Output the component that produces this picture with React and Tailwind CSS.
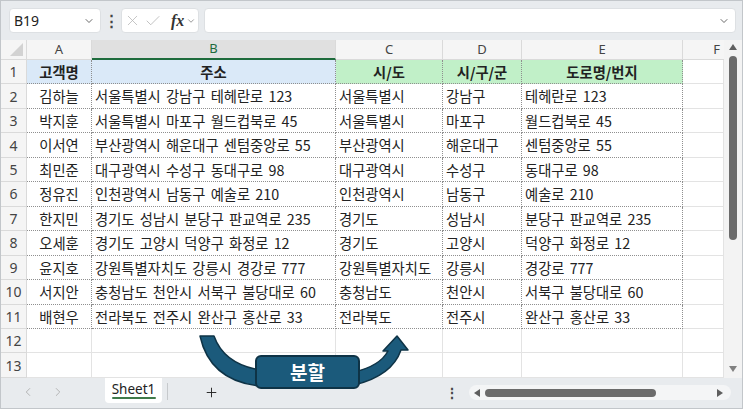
import { ChevronDown, ChevronLeft, ChevronRight, X, Check, Plus } from "lucide-react";

const cols = [
  { key: "A", w: "w-[65px]", align: "justify-center" },
  { key: "B", w: "w-[244px]", align: "justify-start pl-[3px]" },
  { key: "C", w: "w-[107px]", align: "justify-start pl-[3px]" },
  { key: "D", w: "w-[79px]", align: "justify-start pl-[3px]" },
  { key: "E", w: "w-[161px]", align: "justify-start pl-[3px]" },
];

const headerFills = ["bg-[#dae9f8]", "bg-[#dae9f8]", "bg-[#c1f0c8]", "bg-[#c1f0c8]", "bg-[#c1f0c8]"];
const headerTexts = ["고객명", "주소", "시/도", "시/구/군", "도로명/번지"];

const rows = [
  ["김하늘", "서울특별시 강남구 테헤란로 123", "서울특별시", "강남구", "테헤란로 123"],
  ["박지훈", "서울특별시 마포구 월드컵북로 45", "서울특별시", "마포구", "월드컵북로 45"],
  ["이서연", "부산광역시 해운대구 센텀중앙로 55", "부산광역시", "해운대구", "센텀중앙로 55"],
  ["최민준", "대구광역시 수성구 동대구로 98", "대구광역시", "수성구", "동대구로 98"],
  ["정유진", "인천광역시 남동구 예술로 210", "인천광역시", "남동구", "예술로 210"],
  ["한지민", "경기도 성남시 분당구 판교역로 235", "경기도", "성남시", "분당구 판교역로 235"],
  ["오세훈", "경기도 고양시 덕양구 화정로 12", "경기도", "고양시", "덕양구 화정로 12"],
  ["윤지호", "강원특별자치도 강릉시 경강로 777", "강원특별자치도", "강릉시", "경강로 777"],
  ["서지안", "충청남도 천안시 서북구 불당대로 60", "충청남도", "천안시", "서북구 불당대로 60"],
  ["배현우", "전라북도 전주시 완산구 홍산로 33", "전라북도", "전주시", "완산구 홍산로 33"],
];

const dotted = "border-r border-b border-dotted border-[#8f8f8f]";
const plain = "border-r border-b border-[#e3e3e3]";

function RowHead({ n }) {
  return (
    <div className="w-[26px] h-full flex items-center justify-center bg-[#f5f5f5] border-r border-b border-[#dadada] text-[14px] text-[#444] font-['Noto_Sans',sans-serif] [word-spacing:0]">
      {n}
    </div>
  );
}

function Row({ n, cells, header }) {
  return (
    <div className="flex h-[24.46px]">
      <RowHead n={n} />
      {cols.map((c, i) => {
        const has = cells !== null;
        return (
          <div
            key={c.key}
            className={`${c.w} h-full flex items-center overflow-hidden whitespace-nowrap ${header ? "justify-center" : c.align} ${has ? dotted : plain} ${header ? headerFills[i] + " font-bold" : "bg-white"}`}
          >
            {has ? cells[i] : ""}
          </div>
        );
      })}
      <div className={`w-[41px] h-full bg-white ${plain}`} />
    </div>
  );
}

export default function App() {
  return (
    <div className="relative w-[743px] h-[409px] overflow-hidden border border-[#c2c6ca] bg-[#e8ebee] flex flex-col text-[#222] font-['Noto_Sans','Noto_Sans_CJK_KR',sans-serif]">
      {/* formula bar */}
      <div className="h-[39px] flex items-center pl-[8px] shrink-0">
        <div className="w-[92px] h-[25px] bg-white rounded-[4px] border border-[#dde0e3] flex items-center justify-between pl-[4px] pr-[5px]">
          <span className="text-[14px]">B19</span>
          <ChevronDown size={12} strokeWidth={1.6} className="text-[#444]" />
        </div>
        <div className="w-[20px] flex justify-center text-[15px] font-bold text-[#444]">⋮</div>
        <div className="w-[78px] h-[25px] bg-white rounded-[4px] border border-[#dde0e3] flex items-center pl-[2px] gap-[3px]">
          <X size={17} strokeWidth={1.1} className="text-[#b5b5b5]" />
          <Check size={18} strokeWidth={1.1} className="text-[#b5b5b5]" />
          <span className="ml-[6px] font-['Liberation_Serif',serif] italic font-bold text-[16px] text-[#333] leading-none">fx</span>
          <ChevronDown size={10} strokeWidth={1.6} className="text-[#666] -ml-[1px]" />
        </div>
        <div className="ml-[5px] w-[532px] h-[25px] bg-white rounded-[4px] border border-[#dde0e3] flex items-center justify-end pr-[5px]">
          <ChevronDown size={12} strokeWidth={1.6} className="text-[#444]" />
        </div>
      </div>

      {/* sheet */}
      <div className="flex h-[338px] shrink-0">
        <div className="w-[723px] flex flex-col bg-white font-['Noto_Sans_CJK_KR',sans-serif] text-[14.3px] [word-spacing:2px]">
          <div className="flex h-[20px] text-[13px] text-[#444] font-['Noto_Sans',sans-serif]">
            <div className="w-[26px] h-full bg-[#f5f5f5] border-r border-b border-[#dadada] relative">
              <svg width="26" height="20" className="absolute left-0 top-0">
                <polygon points="22,3 22,16 9,16" fill="#d2d2d2" />
              </svg>
            </div>
            <div className="w-[65px] h-full bg-[#f5f5f5] border-r border-b border-[#dadada] flex items-center justify-center">A</div>
            <div className="w-[244px] h-full bg-[#e0e0e0] border-r border-[#dadada] border-b-2 border-b-[#1e6b3c] flex items-center justify-center text-[#1e6b3c]">B</div>
            <div className="w-[107px] h-full bg-[#f5f5f5] border-r border-b border-[#dadada] flex items-center justify-center">C</div>
            <div className="w-[79px] h-full bg-[#f5f5f5] border-r border-b border-[#dadada] flex items-center justify-center">D</div>
            <div className="w-[161px] h-full bg-[#f5f5f5] border-r border-b border-[#dadada] flex items-center justify-center">E</div>
            <div className="w-[41px] h-full bg-[#f5f5f5] border-b border-[#dadada] flex items-center justify-end pr-[4px]">F</div>
          </div>
          <Row n={1} cells={headerTexts} header />
          {rows.map((r, i) => (
            <Row key={i} n={i + 2} cells={r} />
          ))}
          <Row n={12} cells={null} />
          <Row n={13} cells={null} />
        </div>
        <div className="w-[18px] bg-[#f3f3f3] flex flex-col items-center pt-[2px] pb-[2px]">
          <svg width="10" height="8" className="mt-[1px]">
            <polygon points="5,1 9,7 1,7" fill="#606060" />
          </svg>
          <div className="mt-[5px] w-[8px] h-[184px] rounded-full bg-[#6b6b6b]" />
          <div className="flex-1" />
          <svg width="10" height="8" className="mb-[3px]">
            <polygon points="1,1 9,1 5,7" fill="#808080" />
          </svg>
        </div>
      </div>

      {/* sheet tabs */}
      <div className="flex-1 flex items-start font-['Noto_Sans',sans-serif]">
        <div className="w-[104px] h-[28px] flex items-center pl-[20px] gap-[16px] text-[#a8a8a8]">
          <ChevronLeft size={14} strokeWidth={1.4} />
          <ChevronRight size={14} strokeWidth={1.4} />
        </div>
        <div className="w-[57px] h-[25px] bg-white rounded-b-[4px] flex flex-col items-center justify-center relative">
          <span className="text-[13.5px] leading-none -mt-[2px]">Sheet1</span>
          <div className="absolute bottom-[4px] left-[7px] right-[6px] h-[2px] rounded-full bg-[#3f7a4a]" />
        </div>
        <div className="ml-[5px] mt-[5px] w-px h-[17px] bg-[#c6c9cc]" />
        <div className="ml-[36px] h-[28px] flex items-center">
          <Plus size={15} strokeWidth={1.5} className="text-[#222]" />
        </div>
        <div className="ml-[226px] h-[28px] flex items-center text-[14px] font-bold text-[#444]">⋮</div>
        <div className="ml-[10px] mt-[7px] w-[262px] h-[15px] rounded-full bg-[#f4f5f6] flex items-center px-[4px]">
          <svg width="8" height="10">
            <polygon points="7,1 7,9 1,5" fill="#5e5e5e" />
          </svg>
          <div className="ml-[4px] w-[171px] h-[8px] rounded-full bg-[#6b6b6b]" />
          <div className="flex-1" />
          <svg width="8" height="10" className="mr-[3px]">
            <polygon points="1,1 7,5 1,9" fill="#5e5e5e" />
          </svg>
        </div>
      </div>

      {/* split annotation */}
      <svg className="absolute left-[-1px] top-[-1px] pointer-events-none" width="743" height="409" viewBox="0 0 743 409">
        <path d="M200,336 Q210,381 260,386 L260,370 Q224,364 214,336 Z" fill="#1b5a7b" stroke="#0e3346" strokeWidth="1.5" strokeLinejoin="round" />
        <path d="M354,385 Q392,376 401,350 L408,350 L397,336 L383,351 L388,351 Q380,366 354,372 Z" fill="#1b5a7b" stroke="#0e3346" strokeWidth="1.5" strokeLinejoin="round" />
      </svg>
      <div className="absolute left-[254px] top-[354px] w-[105px] h-[34px] rounded-[6px] bg-[#1b5a7b] border-2 border-[#0e3346] flex items-center justify-center text-white font-bold text-[19px] font-['Noto_Sans_CJK_KR',sans-serif]">
        분할
      </div>
    </div>
  );
}
